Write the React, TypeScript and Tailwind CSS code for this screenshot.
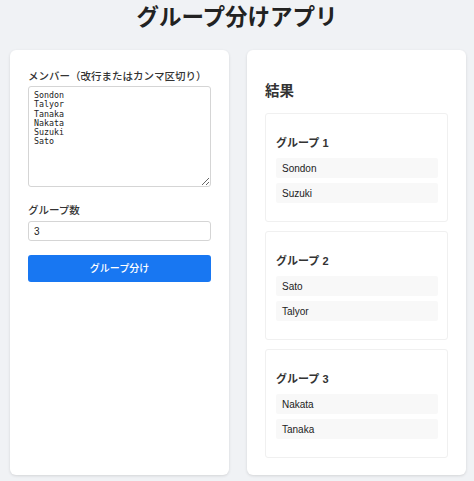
import React from "react";

const members = ["Sondon", "Talyor", "Tanaka", "Nakata", "Suzuki", "Sato"];

const groups: { name: string; members: string[] }[] = [
  { name: "グループ 1", members: ["Sondon", "Suzuki"] },
  { name: "グループ 2", members: ["Sato", "Talyor"] },
  { name: "グループ 3", members: ["Nakata", "Tanaka"] },
];

const sans = "font-['Liberation_Sans','Noto_Sans_CJK_JP',sans-serif]";

export default function App() {
  return (
    <div className={`min-h-[481px] bg-[#f0f2f5] text-[#333] ${sans}`}>
      <h1 className="pt-[3px] text-center text-[22.5px] font-bold leading-[29px] text-[#222]">
        グループ分けアプリ
      </h1>

      <div className="mt-[18px] grid grid-cols-[219px_219px] gap-[18px] pl-[10px]">
        {/* input panel */}
        <div className="h-[425px] rounded-[6px] bg-white px-[18px] pt-[19px] shadow-[0_1px_3px_rgba(0,0,0,0.12)]">
          <label className="block text-[10.5px] font-medium leading-[14px] text-[#333]">
            メンバー（改行またはカンマ区切り）
          </label>
          <textarea
            readOnly
            value={members.join("\n")}
            className="mt-[3px] block h-[101px] w-full resize-y rounded-[3px] border border-[#d5d5d5] px-[5px] py-[4px] font-['DejaVu_Sans_Mono',monospace] text-[8.3px] leading-[9.3px] text-[#222] outline-none"
          />

          <label className="mt-[16px] block text-[10.5px] font-medium leading-[14px] text-[#333]">
            グループ数
          </label>
          <input
            readOnly
            value="3"
            className="mt-[4px] block h-[20px] w-full rounded-[3px] border border-[#d5d5d5] px-[5px] text-[10px] text-[#222] outline-none"
          />

          <button className="mt-[14px] block h-[27px] w-full rounded-[3px] bg-[#1877f2] text-[10px] font-medium text-white">
            グループ分け
          </button>
        </div>

        {/* results panel */}
        <div className="h-[425px] rounded-[6px] bg-white px-[18px] pt-[32px] shadow-[0_1px_3px_rgba(0,0,0,0.12)]">
          <h2 className="text-[14.5px] font-bold leading-[18px] text-[#333]">結果</h2>
          <div className="mt-[13px] flex flex-col gap-[9px]">
            {groups.map((g) => (
              <div
                key={g.name}
                className="rounded-[3px] border border-[#f0f0f0] pb-[18px] pl-[10px] pr-[9px] pt-[22px]"
              >
                <h3 className="text-[11px] font-semibold leading-[14px] text-[#333]">{g.name}</h3>
                <div className="mt-[8px] flex flex-col gap-[5px]">
                  {g.members.map((m) => (
                    <div
                      key={m}
                      className="flex h-[20px] items-center rounded-[2px] bg-[#f8f8f8] px-[6px] text-[10px] text-[#222]"
                    >
                      {m}
                    </div>
                  ))}
                </div>
              </div>
            ))}
          </div>
        </div>
      </div>
    </div>
  );
}
